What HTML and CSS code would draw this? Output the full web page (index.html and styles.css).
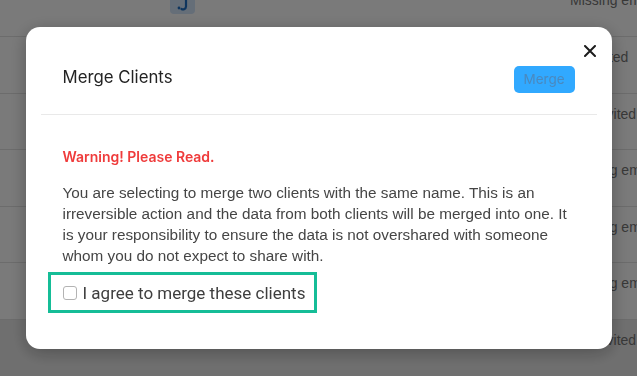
FILE: index.html
```html
<!DOCTYPE html>
<html lang="en">
<head>
<meta charset="utf-8">
<title>Merge Clients</title>
<link rel="stylesheet" href="styles.css">
</head>
<body>
<div class="page">
  <div class="rows">
    <div class="row">
      <div class="cell-icon"><span class="avatar"><svg width="14" height="14" viewBox="0 0 14 14"><circle cx="3" cy="10" r="1.4" fill="#1f6fc4"/><path d="M10 2 V8.5 A3 3 0 0 1 5.5 11" fill="none" stroke="#1f6fc4" stroke-width="2.2" stroke-linecap="round"/></svg></span></div>
      <div class="cell-status">Missing email</div>
    </div>
    <div class="row">
      <div class="cell-icon"><span class="avatar"></span></div>
      <div class="cell-status">Accepted</div>
    </div>
    <div class="row">
      <div class="cell-icon"><span class="avatar"></span></div>
      <div class="cell-status">Not invited</div>
    </div>
    <div class="row">
      <div class="cell-icon"><span class="avatar"></span></div>
      <div class="cell-status">Missing email</div>
    </div>
    <div class="row">
      <div class="cell-icon"><span class="avatar"></span></div>
      <div class="cell-status">Missing email</div>
    </div>
    <div class="row">
      <div class="cell-icon"><span class="avatar"></span></div>
      <div class="cell-status">Missing email</div>
    </div>
    <div class="row row-last">
      <div class="cell-icon"></div>
      <div class="cell-status">Not invited</div>
    </div>
  </div>
</div>

<div class="overlay">
  <div class="modal">
    <button class="close" aria-label="Close">
      <svg width="12" height="12" viewBox="0 0 12 12"><path d="M1 1 L11 11 M11 1 L1 11" stroke="#1c1c1c" stroke-width="2" stroke-linecap="round"/></svg>
    </button>
    <div class="modal-header">
      <h2 class="modal-title">Merge Clients</h2>
      <button class="btn-merge" disabled>Merge</button>
    </div>
    <div class="modal-body">
      <p class="warning">Warning! Please Read.</p>
      <p class="message">You are selecting to merge two clients with the same name. This is an irreversible action and the data from both clients will be merged into one. It is your responsibility to ensure the data is not overshared with someone whom you do not expect to share with.</p>
      <label class="agree">
        <input type="checkbox" class="agree-box">
        <span class="agree-text">I agree to merge these clients</span>
      </label>
    </div>
  </div>
</div>
</body>
</html>
```

FILE: styles.css
```css
html, body {
  margin: 0;
  padding: 0;
  height: 100%;
}

body {
  background: #e9e9e9;
  overflow: hidden;
  font-family: "Liberation Sans", Arial, sans-serif;
}

.page {
  height: 100%;
  overflow: hidden;
}

.rows {
  margin-top: -19.6px;
  background: #ffffff;
}

.row {
  display: grid;
  grid-template-columns: 170px 400px 1fr;
  height: 56.6px;
  box-sizing: border-box;
  border-bottom: 1px solid #e2e2e2;
  padding-top: 11px;
  overflow: hidden;
}

.row-last {
  background: #e9e9e9;
  border-bottom: none;
  height: 56px;
}

.cell-icon {
  grid-column: 2;
}

.avatar {
  display: flex;
  align-items: flex-end;
  justify-content: center;
  width: 25px;
  height: 26px;
  margin-top: -3px;
  border-radius: 4px;
  background: #d3e6fb;
}

.avatar svg {
  margin-bottom: 2px;
}

.cell-status {
  grid-column: 3;
  font-size: 14px;
  line-height: 18px;
  color: #767676;
  white-space: nowrap;
}

.overlay {
  position: fixed;
  inset: 0;
  background: rgba(0, 0, 0, 0.52);
  display: flex;
  align-items: center;
  justify-content: center;
}

.modal {
  position: relative;
  width: 586px;
  box-sizing: border-box;
  background: #ffffff;
  border-radius: 14px;
  padding: 15px;
  box-shadow: 0 4px 18px rgba(0, 0, 0, 0.28);
}

.close {
  position: absolute;
  top: 18px;
  right: 16px;
  width: 12px;
  height: 12px;
  padding: 0;
  border: none;
  background: none;
  display: flex;
}

.modal-header {
  height: 73px;
  box-sizing: border-box;
  padding: 0 22px;
  display: flex;
  align-items: center;
  justify-content: space-between;
  border-bottom: 1px solid #e9e9e9;
}

.modal-title {
  margin: 0 0 2px 0;
  font-family: Inter, "Liberation Sans", sans-serif;
  font-weight: 400;
  font-size: 16.8px;
  color: #232323;
}

.btn-merge {
  width: 61px;
  height: 27px;
  margin-top: 2px;
  padding: 0;
  border: none;
  border-radius: 5px;
  background: #31a9ff;
  color: #4a89bf;
  font-family: Inter, "Liberation Sans", sans-serif;
  font-size: 13.5px;
  font-weight: 400;
}

.modal-body {
  padding: 31px 22px 21px;
}

.warning {
  margin: 0 0 15px 0;
  font-family: Inter, "Liberation Sans", sans-serif;
  font-weight: 600;
  font-size: 14px;
  line-height: 21px;
  color: #ef3b3b;
}

.message {
  margin: 0 0 6px 0;
  font-size: 15.3px;
  line-height: 21px;
  color: #454545;
}

.agree {
  display: flex;
  align-items: center;
  gap: 6px;
  width: fit-content;
  height: 41px;
  box-sizing: border-box;
  margin-left: -15px;
  padding: 0 9px 0 12px;
  border: 3px solid #15bd97;
}

.agree-box {
  appearance: none;
  -webkit-appearance: none;
  width: 14px;
  height: 14px;
  margin: 0;
  border: 1px solid #b3b3b3;
  border-radius: 3px;
  background: #ffffff;
}

.agree-text {
  font-family: Roboto, "Liberation Sans", sans-serif;
  font-size: 17px;
  color: #3e3e3e;
}
```
